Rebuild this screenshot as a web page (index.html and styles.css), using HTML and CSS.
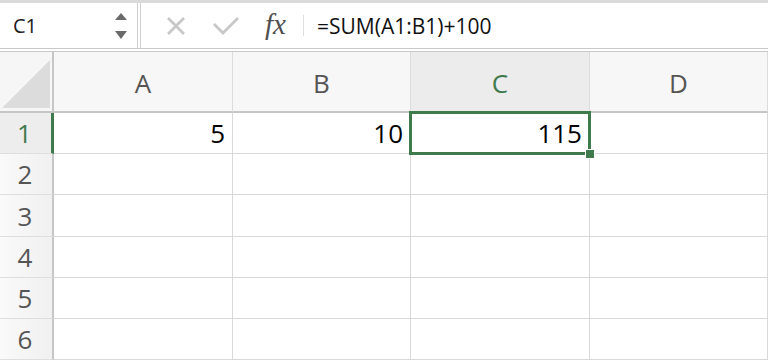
FILE: index.html
```html
<!DOCTYPE html>
<html lang="en">

<head>
    <meta charset="UTF-8">
    <meta name="viewport" content="width=device-width, initial-scale=1.0">
    <title>Sheet</title>
    <link rel="stylesheet" href="styles.css">
</head>

<body>
    <div class="formula-bar">
        <div class="name-box">
            <span class="cell-ref">C1</span>
            <svg class="stepper" width="14" height="28" viewBox="0 0 14 28">
                <path d="M1 8 L7 1 L13 8 Z" fill="#6a6a6a" />
                <path d="M1 19 L13 19 L7 27 Z" fill="#6a6a6a" />
            </svg>
        </div>
        <div class="actions">
            <svg class="icon-cancel" width="20" height="20" viewBox="0 0 20 20">
                <path d="M2 2 L18 18 M18 2 L2 18" stroke="#c8c8c8" stroke-width="2.8" fill="none" />
            </svg>
            <svg class="icon-enter" width="28" height="20" viewBox="0 0 28 20">
                <path d="M2 8 L11 17 L26 2" stroke="#c8c8c8" stroke-width="2.8" fill="none" />
            </svg>
            <span class="fx">fx</span>
        </div>
        <div class="formula">=SUM(A1:B1)+100</div>
    </div>

    <div class="sheet">
        <div class="corner">
            <svg width="48" height="48" viewBox="0 0 48 48">
                <path d="M0 48 L48 0 L48 48 Z" fill="#dcdcdc" />
            </svg>
        </div>
        <div class="col-head">A</div>
        <div class="col-head">B</div>
        <div class="col-head active">C</div>
        <div class="col-head">D</div>

        <div class="row-head active">1</div>
        <div class="cell">5</div>
        <div class="cell">10</div>
        <div class="cell selected">115<span class="handle"></span></div>
        <div class="cell"></div>

        <div class="row-head">2</div>
        <div class="cell"></div>
        <div class="cell"></div>
        <div class="cell"></div>
        <div class="cell"></div>

        <div class="row-head">3</div>
        <div class="cell"></div>
        <div class="cell"></div>
        <div class="cell"></div>
        <div class="cell"></div>

        <div class="row-head">4</div>
        <div class="cell"></div>
        <div class="cell"></div>
        <div class="cell"></div>
        <div class="cell"></div>

        <div class="row-head">5</div>
        <div class="cell"></div>
        <div class="cell"></div>
        <div class="cell"></div>
        <div class="cell"></div>

        <div class="row-head">6</div>
        <div class="cell"></div>
        <div class="cell"></div>
        <div class="cell"></div>
        <div class="cell"></div>
    </div>
</body>

</html>
```

FILE: styles.css
```css
body {
    margin: 0;
    width: 768px;
    height: 360px;
    overflow: hidden;
    background: #fff;
    font-family: "Open Sans", Arial, sans-serif;
}

.formula-bar {
    display: flex;
    align-items: stretch;
    height: 52px;
    box-sizing: border-box;
    border-top: 3px solid #dadada;
    border-bottom: 4px double #c9c9c9;
}

.name-box {
    width: 141px;
    box-sizing: border-box;
    display: flex;
    align-items: center;
    justify-content: space-between;
    padding: 0 9px 0 13px;
    border-right: 4px double #cfcfcf;
}

.cell-ref {
    font-size: 20px;
    color: #1a1a1a;
}

.stepper {
    margin-top: 1px;
}

.actions {
    display: flex;
    align-items: center;
    width: 163px;
    box-sizing: border-box;
    padding-left: 25px;
    position: relative;
}

.icon-cancel {
    margin-right: 26px;
}

.icon-enter {
    margin-right: 25px;
}

.fx {
    font-family: "Liberation Serif", "DejaVu Serif", serif;
    font-style: italic;
    font-size: 29px;
    color: #4f4f4f;
    margin-top: -2px;
}

.actions::after {
    content: "";
    position: absolute;
    right: 0;
    top: 12px;
    bottom: 12px;
    width: 1px;
    background: #dedede;
}

.formula {
    display: flex;
    align-items: center;
    padding-left: 13px;
    font-size: 21px;
    color: #111;
}

.sheet {
    display: grid;
    grid-template-columns: 54px 179px 178px 179px 178px;
    grid-template-rows: 61px 41px 41px 42px 41px 41px 41px;
}

.corner {
    background: #f6f6f6;
    border-right: 2px solid #c6c6c6;
    border-bottom: 2px solid #c6c6c6;
    display: flex;
    align-items: flex-end;
    justify-content: flex-end;
    padding: 0 2px 3px 0;
}

.col-head {
    background: #f7f7f7;
    border-right: 1px solid #dcdcdc;
    border-bottom: 2px solid #c6c6c6;
    display: flex;
    align-items: center;
    justify-content: center;
    font-size: 26px;
    color: #555;
    padding-top: 2px;
}

.col-head.active {
    background: #ececec;
    color: #3f7a4c;
}

.row-head {
    background: linear-gradient(to right, #fafafa, #f0f0f0);
    border-right: 2px solid #c6c6c6;
    border-bottom: 1px solid #dedede;
    display: flex;
    align-items: center;
    justify-content: center;
    font-size: 26px;
    color: #555;
    padding-right: 2px;
}

.row-head.active {
    background: #ededed;
    color: #3f7a4c;
    border-right: 3px solid #3f7a4c;
}

.cell {
    border-right: 1px solid #d9d9d9;
    border-bottom: 1px solid #d9d9d9;
    display: flex;
    align-items: center;
    justify-content: flex-end;
    padding-right: 7px;
    font-size: 26px;
    color: #000;
}

.cell.selected {
    position: relative;
}

.cell.selected::after {
    content: "";
    position: absolute;
    left: -2px;
    top: -2px;
    right: -2px;
    bottom: -2px;
    border: 3px solid #3f7a4c;
}

.handle {
    position: absolute;
    right: -6px;
    bottom: -6px;
    width: 8px;
    height: 8px;
    background: #3f7a4c;
    border: 1px solid #fff;
    z-index: 1;
}
```
